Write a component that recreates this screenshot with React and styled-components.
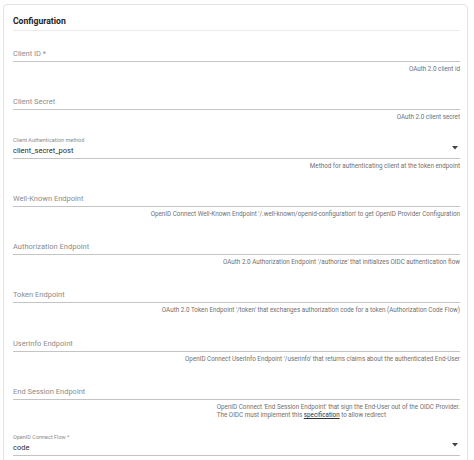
import React from 'react'
import styled, { createGlobalStyle } from 'styled-components'

const GlobalStyle = createGlobalStyle`
  html, body {
    margin: 0;
    padding: 0;
    overflow: hidden;
    background: #ffffff;
  }
  body {
    font-family: Roboto, "Liberation Sans", sans-serif;
  }
`

const Card = styled.div`
  margin: 4px 6px 0 3px;
  padding: 0 7px 40px 9px;
  border: 1px solid #e3e3e3;
  border-radius: 4px;
  background: #fff;
  min-height: 500px;
`

const Header = styled.div`
  padding: 10px 0 3px;
  border-bottom: 1px solid #ececec;
`

const Title = styled.div`
  font-size: 8.6px;
  line-height: 12px;
  font-weight: 700;
  color: #222;
`

const Form = styled.div`
  display: flex;
  flex-direction: column;
  gap: 12.3px;
  padding-top: 6px;
`

const Field = styled.div`
  display: flex;
  flex-direction: column;
`

const InputBox = styled.div`
  display: flex;
  align-items: flex-end;
  justify-content: space-between;
  padding-bottom: 2px;
  box-sizing: border-box;
  height: 25px;
  border-bottom: 1px solid #c4c4c4;
`

const Label = styled.div`
  font-size: 7.5px;
  line-height: 10px;
  color: #8c8c8c;
`

const Filled = styled.div`
  display: flex;
  flex-direction: column;
`

const SmallLabel = styled.div`
  font-size: 5.5px;
  line-height: 8px;
  color: #8c8c8c;
`

const Value = styled.div`
  margin-top: 2px;
  font-size: 7.5px;
  line-height: 10px;
  color: #2a2a2a;
`

const CaretSlot = styled.div`
  display: flex;
  align-items: center;
  height: 10px;
  padding: 0 2px 3px 0;
`

const HelperRow = styled.div`
  display: flex;
  justify-content: flex-end;
  margin-top: 3px;
`

const Helper = styled.div`
  font-size: 6.3px;
  line-height: 8px;
  color: #707070;
  text-align: left;
`

const Link = styled.span`
  color: #333;
  text-decoration: underline;
`

const fields = [
  { label: 'Client ID *', helper: 'OAuth 2.0 client id' },
  { label: 'Client Secret', helper: 'OAuth 2.0 client secret' },
  {
    label: 'Client Authentication method',
    value: 'client_secret_post',
    select: true,
    helper: 'Method for authenticating client at the token endpoint',
  },
  {
    label: 'Well-Known Endpoint',
    helper: "OpenID Connect Well-Known Endpoint '/.well-known/openid-configuration' to get OpenID Provider Configuration",
  },
  {
    label: 'Authorization Endpoint',
    helper: "OAuth 2.0 Authorization Endpoint '/authorize' that initializes OIDC authentication flow",
  },
  {
    label: 'Token Endpoint',
    helper: "OAuth 2.0 Token Endpoint '/token' that exchanges authorization code for a token (Authorization Code Flow)",
  },
  {
    label: 'UserInfo Endpoint',
    helper: "OpenID Connect UserInfo Endpoint '/userinfo' that returns claims about the authenticated End-User",
  },
  {
    label: 'End Session Endpoint',
    helper: (
      <>
        OpenID Connect 'End Session Endpoint' that sign the End-User out of the OIDC Provider.
        <br />
        The OIDC must implement this <Link>specification</Link> to allow redirect
      </>
    ),
  },
  { label: 'OpenID Connect Flow *', value: 'code', select: true },
]

const Caret = () => (
  <svg width="6" height="4" viewBox="0 0 6 4">
    <path d="M0 0 L6 0 L3 3.5 Z" fill="#444" />
  </svg>
)

const FormField = ({ label, value, select, helper }) => (
  <Field>
    <InputBox>
      {value !== undefined ? (
        <Filled>
          <SmallLabel>{label}</SmallLabel>
          <Value>{value}</Value>
        </Filled>
      ) : (
        <Label>{label}</Label>
      )}
      {select && (
        <CaretSlot>
          <Caret />
        </CaretSlot>
      )}
    </InputBox>
    {helper && (
      <HelperRow>
        <Helper>{helper}</Helper>
      </HelperRow>
    )}
  </Field>
)

export default function App() {
  return (
    <>
      <GlobalStyle />
      <Card>
        <Header>
          <Title>Configuration</Title>
        </Header>
        <Form>
          {fields.map(f => (
            <FormField key={f.label} {...f} />
          ))}
        </Form>
      </Card>
    </>
  )
}
